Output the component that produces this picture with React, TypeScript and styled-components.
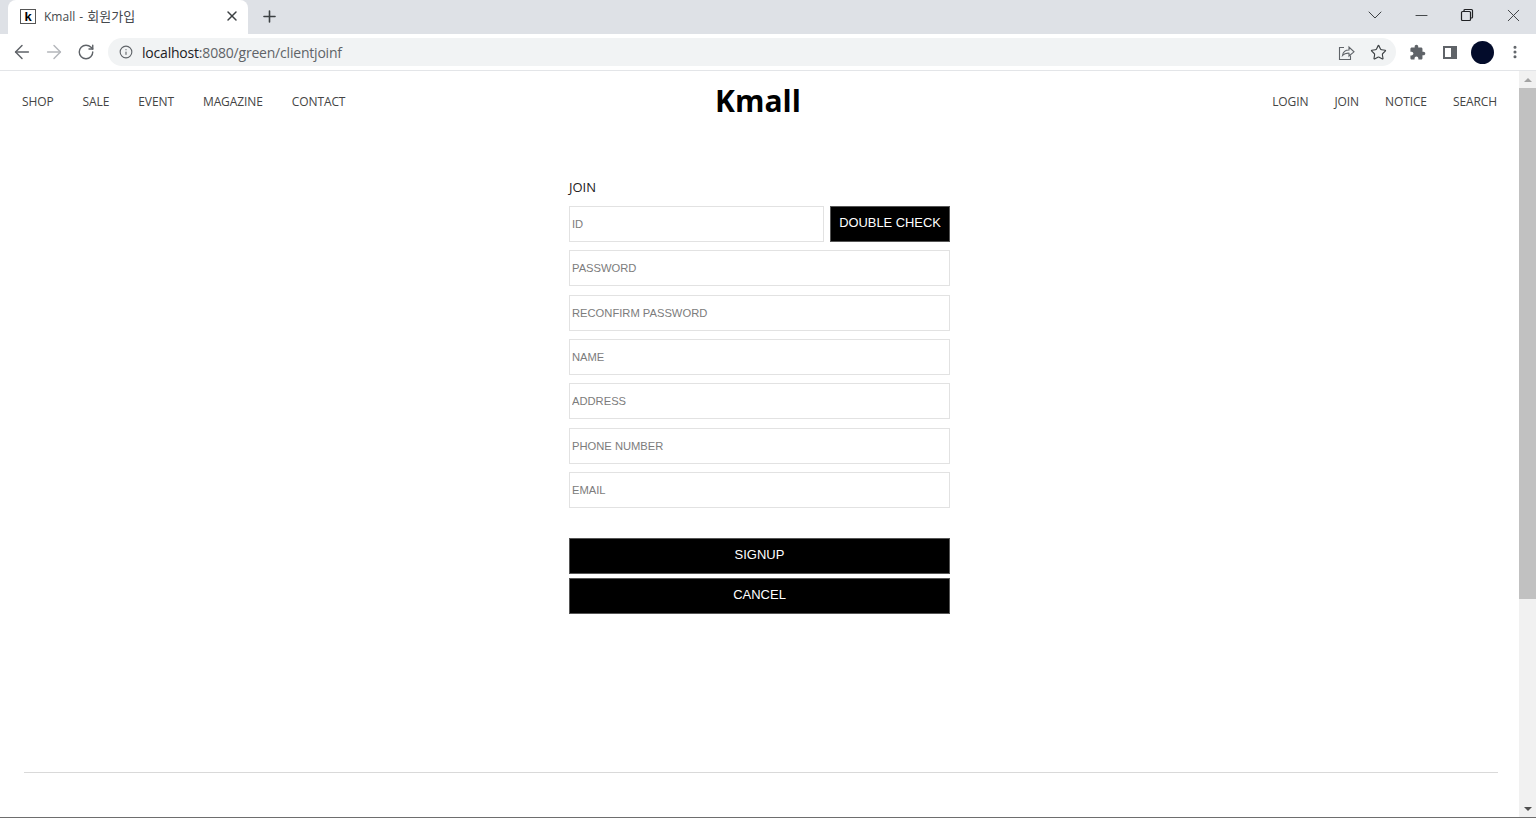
import styled, { createGlobalStyle } from "styled-components";
import {
  ArrowLeft,
  ArrowRight,
  ChevronDown,
  Info,
  Minus,
  MoreVertical,
  Plus,
  RotateCw,
  Star,
  X,
} from "lucide-react";

const leftMenu = ["SHOP", "SALE", "EVENT", "MAGAZINE", "CONTACT"];
const rightMenu = ["LOGIN", "JOIN", "NOTICE", "SEARCH"];
const fields = [
  "PASSWORD",
  "RECONFIRM PASSWORD",
  "NAME",
  "ADDRESS",
  "PHONE NUMBER",
  "EMAIL",
];

export default function App() {
  return (
    <Window>
      <GlobalStyle />
      <TabStrip>
        <Tab>
          <Favicon>k</Favicon>
          <TabTitle>
            Kmall - <TabTitleKo>회원가입</TabTitleKo>
          </TabTitle>
          <X size={16} strokeWidth={2.2} color="#3c4043" />
        </Tab>
        <NewTab>
          <Plus size={19} strokeWidth={2} color="#3c4043" />
        </NewTab>
        <WindowControls>
          <WindowControl>
            <ChevronDown size={24} strokeWidth={1} color="#3c4043" />
          </WindowControl>
          <WindowControl>
            <Minus size={19} strokeWidth={1.2} color="#3c4043" />
          </WindowControl>
          <WindowControl>
            <svg width="14" height="14" viewBox="0 0 14 14" fill="none" stroke="#202124" strokeWidth="1.2">
              <rect x="1.5" y="3.5" width="9" height="9" rx="1" />
              <path d="M4 3.500V2.500a1 1 0 0 1 1-1h6.500a1 1 0 0 1 1 1V9a1 1 0 0 1-1 1h-1" />
            </svg>
          </WindowControl>
          <WindowControl>
            <X size={21} strokeWidth={1.1} color="#3c4043" />
          </WindowControl>
        </WindowControls>
      </TabStrip>

      <Toolbar>
        <NavIcons>
          <NavIcon>
            <ArrowLeft size={22} strokeWidth={1.6} color="#5f6368" />
          </NavIcon>
          <NavIcon>
            <ArrowRight size={22} strokeWidth={1.6} color="#b4b7bb" />
          </NavIcon>
          <NavIcon>
            <RotateCw size={18} strokeWidth={1.9} color="#5f6368" />
          </NavIcon>
        </NavIcons>
        <Omnibox>
          <Info size={14} strokeWidth={1.9} color="#5f6368" />
          <Url>
            localhost<UrlMuted>:8080/green/clientjoinf</UrlMuted>
          </Url>
          <OmniboxActions>
            <svg width="17" height="17" viewBox="0 0 17 17" fill="none" stroke="#5f6368" strokeWidth="1.1">
              <path d="M6 3.500H1.500v12h11v-4" />
              <path d="M4.500 11.500c.6-3.600 3-5.500 6.500-5.500V3l5 4.800L11 12V9.200c-2.800-.2-5 .6-6.500 2.300z" />
            </svg>
            <Star size={17} strokeWidth={1.6} color="#3c4043" />
          </OmniboxActions>
        </Omnibox>
        <ToolbarActions>
          <svg width="17" height="17" viewBox="0 0 24 24" fill="#5f6368">
            <path d="M20.500 11H19V7c0-1.100-.9-2-2-2h-4V3.500C13 2.120 11.880 1 10.500 1S8 2.120 8 3.500V5H4c-1.100 0-1.990.9-1.990 2v3.800H3.500c1.490 0 2.700 1.210 2.700 2.700s-1.210 2.700-2.700 2.700H2V20c0 1.100.9 2 2 2h3.800v-1.500c0-1.490 1.210-2.700 2.700-2.700 1.490 0 2.700 1.210 2.700 2.700V22H17c1.100 0 2-.9 2-2v-4h1.500c1.380 0 2.500-1.120 2.500-2.500S21.880 11 20.500 11z" />
          </svg>
          <SidePanelIcon />
          <Avatar />
          <MoreVertical size={16} strokeWidth={2.6} color="#5f6368" />
        </ToolbarActions>
      </Toolbar>

      <Viewport>
        <Page>
          <Header>
            <LeftMenu>
              {leftMenu.map((item) => (
                <MenuLink key={item}>{item}</MenuLink>
              ))}
            </LeftMenu>
            <Logo>Kmall</Logo>
            <RightMenu>
              {rightMenu.map((item) => (
                <MenuLink key={item}>{item}</MenuLink>
              ))}
            </RightMenu>
          </Header>

          <Form>
            <FormTitle>JOIN</FormTitle>
            <IdRow>
              <IdInput placeholder="ID" />
              <CheckButton type="button">DOUBLE CHECK</CheckButton>
            </IdRow>
            {fields.map((field) => (
              <Input key={field} placeholder={field} />
            ))}
            <Buttons>
              <SubmitButton type="button">SIGNUP</SubmitButton>
              <SubmitButton type="button">CANCEL</SubmitButton>
            </Buttons>
          </Form>

          <Footer />
        </Page>

        <Scrollbar>
          <ScrollArrow $up />
          <ScrollThumb />
          <ScrollTrack />
          <ScrollArrow />
        </Scrollbar>
      </Viewport>
    </Window>
  );
}

const GlobalStyle = createGlobalStyle`
  html, body {
    margin: 0;
    padding: 0;
    height: 100%;
    overflow: hidden;
    background: #fff;
  }
  input::placeholder {
    color: #7c7c7c;
    opacity: 1;
  }
`;

const Window = styled.div`
  width: 1536px;
  height: 818px;
  display: flex;
  flex-direction: column;
  overflow: hidden;
  font-family: "Liberation Sans", Arial, sans-serif;
`;

const TabStrip = styled.div`
  height: 34px;
  flex: none;
  display: flex;
  align-items: flex-end;
  background: #dee1e6;
  padding-left: 8px;
`;

const Tab = styled.div`
  width: 240px;
  height: 34px;
  box-sizing: border-box;
  display: flex;
  align-items: center;
  padding: 0 8px 2px 12px;
  background: #fff;
  border-radius: 8px 8px 0 0;
`;

const Favicon = styled.div`
  width: 14px;
  height: 13px;
  margin-right: 8px;
  border: 1px solid #555;
  display: flex;
  align-items: center;
  justify-content: center;
  font-family: "Liberation Sans", Arial, sans-serif;
  font-size: 13px;
  font-weight: 700;
  line-height: 1;
  color: #000;
`;

const TabTitle = styled.span`
  flex: 1;
  padding-bottom: 2px;
  font-family: "Open Sans", sans-serif;
  font-size: 12px;
  word-spacing: 1px;
  color: #45494d;
`;

const TabTitleKo = styled.span`
  font-family: "Noto Sans CJK KR", sans-serif;
  font-size: 13px;
`;

const NewTab = styled.div`
  width: 43px;
  height: 34px;
  display: flex;
  align-items: center;
  justify-content: center;
  padding-bottom: 1px;
  box-sizing: border-box;
`;

const WindowControls = styled.div`
  margin-left: auto;
  height: 30px;
  align-self: flex-start;
  display: flex;
`;

const WindowControl = styled.div`
  width: 46px;
  display: flex;
  align-items: center;
  justify-content: center;
`;

const Toolbar = styled.div`
  height: 37px;
  flex: none;
  box-sizing: border-box;
  display: flex;
  align-items: center;
  background: #fff;
  border-bottom: 1px solid #e3e5e8;
`;

const NavIcons = styled.div`
  width: 108px;
  flex: none;
  display: flex;
  align-items: center;
  padding-left: 6px;
  box-sizing: border-box;
`;

const NavIcon = styled.div`
  width: 32px;
  display: flex;
  align-items: center;
  justify-content: center;
`;

const Omnibox = styled.div`
  width: 1288px;
  height: 28px;
  flex: none;
  display: flex;
  align-items: center;
  gap: 9px;
  padding: 0 9px 0 11px;
  box-sizing: border-box;
  background: #f1f3f4;
  border-radius: 14px;
`;

const Url = styled.span`
  font-family: "Open Sans", sans-serif;
  font-size: 14px;
  color: #202124;
  letter-spacing: -0.2px;
`;

const UrlMuted = styled.span`
  color: #5f6368;
`;

const OmniboxActions = styled.div`
  margin-left: auto;
  display: flex;
  align-items: center;
  gap: 15px;
`;

const ToolbarActions = styled.div`
  flex: 1;
  display: flex;
  align-items: center;
  gap: 17px;
  padding-left: 13px;
`;

const SidePanelIcon = styled.div`
  width: 14px;
  height: 13px;
  box-sizing: border-box;
  border: 2px solid #5f6368;
  border-right-width: 6px;
`;

const Avatar = styled.div`
  width: 23px;
  height: 23px;
  margin-left: -3px;
  margin-right: -4px;
  border-radius: 50%;
  background: #030c2b;
`;

const Viewport = styled.div`
  flex: 1;
  min-height: 0;
  display: flex;
  border-bottom: 1px solid #6e6e6e;
`;

const Page = styled.main`
  flex: 1;
  min-width: 0;
  display: flex;
  flex-direction: column;
  align-items: center;
`;

const Header = styled.header`
  width: 100%;
  height: 60px;
  flex: none;
  box-sizing: border-box;
  display: grid;
  grid-template-columns: 1fr auto 1fr;
  align-items: center;
  padding: 0 22px;
`;

const LeftMenu = styled.nav`
  display: flex;
  gap: 29px;
`;

const RightMenu = styled.nav`
  display: flex;
  gap: 26px;
  justify-content: flex-end;
`;

const MenuLink = styled.a`
  font-family: "Open Sans", sans-serif;
  font-size: 12px;
  letter-spacing: -0.1px;
  color: #444;
`;

const Logo = styled.h1`
  margin: 0 0 0 -3px;
  font-family: "Open Sans", sans-serif;
  font-size: 30px;
  font-weight: 700;
  line-height: 1;
  color: #000;
`;

const Form = styled.form`
  width: 381px;
  margin-top: 46.500px;
  display: flex;
  flex-direction: column;
  gap: 8.330px;
`;

const FormTitle = styled.h2`
  margin: 0 0 2.170px;
  font-family: "Open Sans", sans-serif;
  font-size: 13px;
  font-weight: 400;
  line-height: 18px;
  color: #222;
`;

const IdRow = styled.div`
  display: flex;
  gap: 6px;
`;

const Input = styled.input`
  height: 36px;
  flex: none;
  box-sizing: border-box;
  padding: 0 2px;
  border: 1px solid #e2e2e2;
  outline: none;
  background: #fff;
  font-family: "Liberation Sans", Arial, sans-serif;
  font-size: 11.200px;
`;

const IdInput = styled(Input)`
  flex: 1;
  min-width: 0;
`;

const CheckButton = styled.button`
  flex: none;
  width: 120px;
  height: 36px;
  padding: 0 0 2px;
  border: 1px solid #555;
  background: #000;
  color: #fff;
  font-family: "Liberation Sans", Arial, sans-serif;
  font-size: 12.900px;
`;

const Buttons = styled.div`
  display: flex;
  flex-direction: column;
  gap: 4px;
  margin-top: 21.500px;
`;

const SubmitButton = styled.button`
  width: 100%;
  height: 36px;
  padding: 0 0 2px;
  border: 1px solid #555;
  background: #000;
  color: #fff;
  font-family: "Liberation Sans", Arial, sans-serif;
  font-size: 13px;
`;

const Footer = styled.footer`
  width: calc(100% - 45px);
  margin-top: auto;
  margin-bottom: 44px;
  margin-left: 3px;
  border-top: 1px solid #d9d9d9;
`;

const Scrollbar = styled.aside`
  width: 17px;
  flex: none;
  display: flex;
  flex-direction: column;
  background: #f1f1f1;
`;

const ScrollArrow = styled.div<{ $up?: boolean }>`
  height: 17px;
  flex: none;
  display: flex;
  align-items: center;
  justify-content: center;
  &::before {
    content: "";
    border-left: 4px solid transparent;
    border-right: 4px solid transparent;
    ${(p) =>
      p.$up
        ? "border-bottom: 4px solid #a3a3a3;"
        : "border-top: 4px solid #505050;"}
  }
`;

const ScrollThumb = styled.div`
  height: 511px;
  flex: none;
  background: #c1c1c1;
`;

const ScrollTrack = styled.div`
  flex: 1;
`;
